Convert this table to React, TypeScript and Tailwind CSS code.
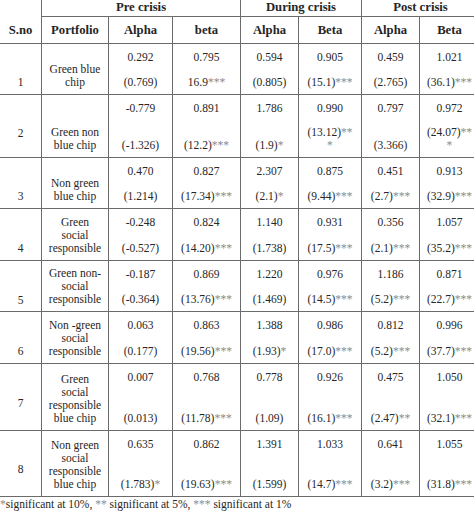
import React from 'react';

type Stat = { v: string; t: string[] };

interface Row {
  no: string;
  name: string[];
  h: string;
  noPb: string;
  stats: Stat[];
}

const cols = 'grid grid-cols-[42px_67px_64px_68px_58px_63px_58px_60px]';
const line = 'border-[#6b6b6b]';

const rows: Row[] = [
  {
    no: '1',
    name: ['Green blue', 'chip'],
    h: 'h-[51px]',
    noPb: 'pb-[5px]',
    stats: [
      { v: '0.292', t: ['(0.769)'] },
      { v: '0.795', t: ['16.9***'] },
      { v: '0.594', t: ['(0.805)'] },
      { v: '0.905', t: ['(15.1)***'] },
      { v: '0.459', t: ['(2.765)'] },
      { v: '1.021', t: ['(36.1)***'] },
    ],
  },
  {
    no: '2',
    name: ['Green non', 'blue chip'],
    h: 'h-[63px]',
    noPb: 'pb-[17px]',
    stats: [
      { v: '-0.779', t: ['(-1.326)'] },
      { v: '0.891', t: ['(12.2)***'] },
      { v: '1.786', t: ['(1.9)*'] },
      { v: '0.990', t: ['(13.12)**', '*'] },
      { v: '0.797', t: ['(3.366)'] },
      { v: '0.972', t: ['(24.07)**', '*'] },
    ],
  },
  {
    no: '3',
    name: ['Non green', 'blue chip'],
    h: 'h-[51px]',
    noPb: 'pb-[5px]',
    stats: [
      { v: '0.470', t: ['(1.214)'] },
      { v: '0.827', t: ['(17.34)***'] },
      { v: '2.307', t: ['(2.1)*'] },
      { v: '0.875', t: ['(9.44)***'] },
      { v: '0.451', t: ['(2.7)***'] },
      { v: '0.913', t: ['(32.9)***'] },
    ],
  },
  {
    no: '4',
    name: ['Green', 'social', 'responsible'],
    h: 'h-[52px]',
    noPb: 'pb-[5px]',
    stats: [
      { v: '-0.248', t: ['(-0.527)'] },
      { v: '0.824', t: ['(14.20)***'] },
      { v: '1.140', t: ['(1.738)'] },
      { v: '0.931', t: ['(17.5)***'] },
      { v: '0.356', t: ['(2.1)***'] },
      { v: '1.057', t: ['(35.2)***'] },
    ],
  },
  {
    no: '5',
    name: ['Green non-', 'social', 'responsible'],
    h: 'h-[51px]',
    noPb: 'pb-[4px]',
    stats: [
      { v: '-0.187', t: ['(-0.364)'] },
      { v: '0.869', t: ['(13.76)***'] },
      { v: '1.220', t: ['(1.469)'] },
      { v: '0.976', t: ['(14.5)***'] },
      { v: '1.186', t: ['(5.2)***'] },
      { v: '0.871', t: ['(22.7)***'] },
    ],
  },
  {
    no: '6',
    name: ['Non -green', 'social', 'responsible'],
    h: 'h-[52px]',
    noPb: 'pb-[5px]',
    stats: [
      { v: '0.063', t: ['(0.177)'] },
      { v: '0.863', t: ['(19.56)***'] },
      { v: '1.388', t: ['(1.93)*'] },
      { v: '0.986', t: ['(17.0)***'] },
      { v: '0.812', t: ['(5.2)***'] },
      { v: '0.996', t: ['(37.7)***'] },
    ],
  },
  {
    no: '7',
    name: ['Green', 'social', 'responsible', 'blue chip'],
    h: 'h-[67px]',
    noPb: 'pb-[20px]',
    stats: [
      { v: '0.007', t: ['(0.013)'] },
      { v: '0.768', t: ['(11.78)***'] },
      { v: '0.778', t: ['(1.09)'] },
      { v: '0.926', t: ['(16.1)***'] },
      { v: '0.475', t: ['(2.47)**'] },
      { v: '1.050', t: ['(32.1)***'] },
    ],
  },
  {
    no: '8',
    name: ['Non green', 'social', 'responsible', 'blue chip'],
    h: 'h-[66px]',
    noPb: 'pb-[20px]',
    stats: [
      { v: '0.635', t: ['(1.783)*'] },
      { v: '0.862', t: ['(19.63)***'] },
      { v: '1.391', t: ['(1.599)'] },
      { v: '1.033', t: ['(14.7)***'] },
      { v: '0.641', t: ['(3.2)***'] },
      { v: '1.055', t: ['(31.8)***'] },
    ],
  },
];

// split trailing asterisks so they can be drawn lighter, as in the scan
function Stars({ text }: { text: string }) {
  const m = text.match(/^(.*?)(\**)$/);
  const body = m ? m[1] : text;
  const stars = m ? m[2] : '';
  return (
    <span className="whitespace-nowrap">
      {body}
      {stars && <span className="text-[#8c8c8c]">{stars}</span>}
    </span>
  );
}

const headers = ['S.no', 'Portfolio', 'Alpha', 'beta', 'Alpha', 'Beta', 'Alpha', 'Beta'];

export default function App() {
  return (
    <div className="w-[474px] h-[511px] overflow-hidden bg-white text-[#262626] font-['Liberation_Serif',serif]">
      <div className="w-[480px]">
        {/* period header */}
        <div className={`${cols} h-[17px] text-[12.7px] leading-[15px] font-bold`}>
          <div className={`border-r ${line}`} />
          <div className={`col-span-3 flex justify-center border-r border-b ${line}`}>Pre crisis</div>
          <div className={`col-span-2 flex justify-center border-r border-b ${line}`}>During crisis</div>
          <div className={`col-span-2 flex justify-center border-r border-b ${line}`}>Post crisis</div>
        </div>

        {/* column header */}
        <div className={`${cols} h-[27px] text-[12.7px] font-bold`}>
          {headers.map((h, i) => (
            <div key={i} className={`flex items-center justify-center pt-[2px] border-r border-b ${line}`}>
              {h}
            </div>
          ))}
        </div>

        {rows.map((r) => (
          <div key={r.no} className={`${cols} ${r.h} text-[11.5px] leading-[13px]`}>
            <div className={`flex flex-col justify-end items-center ${r.noPb} border-r border-b ${line}`}>
              {r.no}
            </div>
            <div className={`flex flex-col justify-end items-center text-center pb-[5px] border-r border-b ${line}`}>
              {r.name.map((n) => (
                <span key={n} className="whitespace-nowrap">{n}</span>
              ))}
            </div>
            {r.stats.map((s, i) => (
              <div
                key={i}
                className={`flex flex-col justify-between items-center pt-[7px] pb-[5px] border-r border-b ${line}`}
              >
                <span>{s.v}</span>
                <div className="flex flex-col items-center">
                  {s.t.map((t, j) => (
                    <Stars key={j} text={t} />
                  ))}
                </div>
              </div>
            ))}
          </div>
        ))}

        <div className="text-[11.5px] leading-[13px] pt-[1px] whitespace-nowrap">
          <span className="text-[#8c8c8c]">*</span>significant at 10%, <span className="text-[#8c8c8c]">**</span> significant at 5%,{' '}
          <span className="text-[#8c8c8c]">***</span> significant at 1%
        </div>
      </div>
    </div>
  );
}
